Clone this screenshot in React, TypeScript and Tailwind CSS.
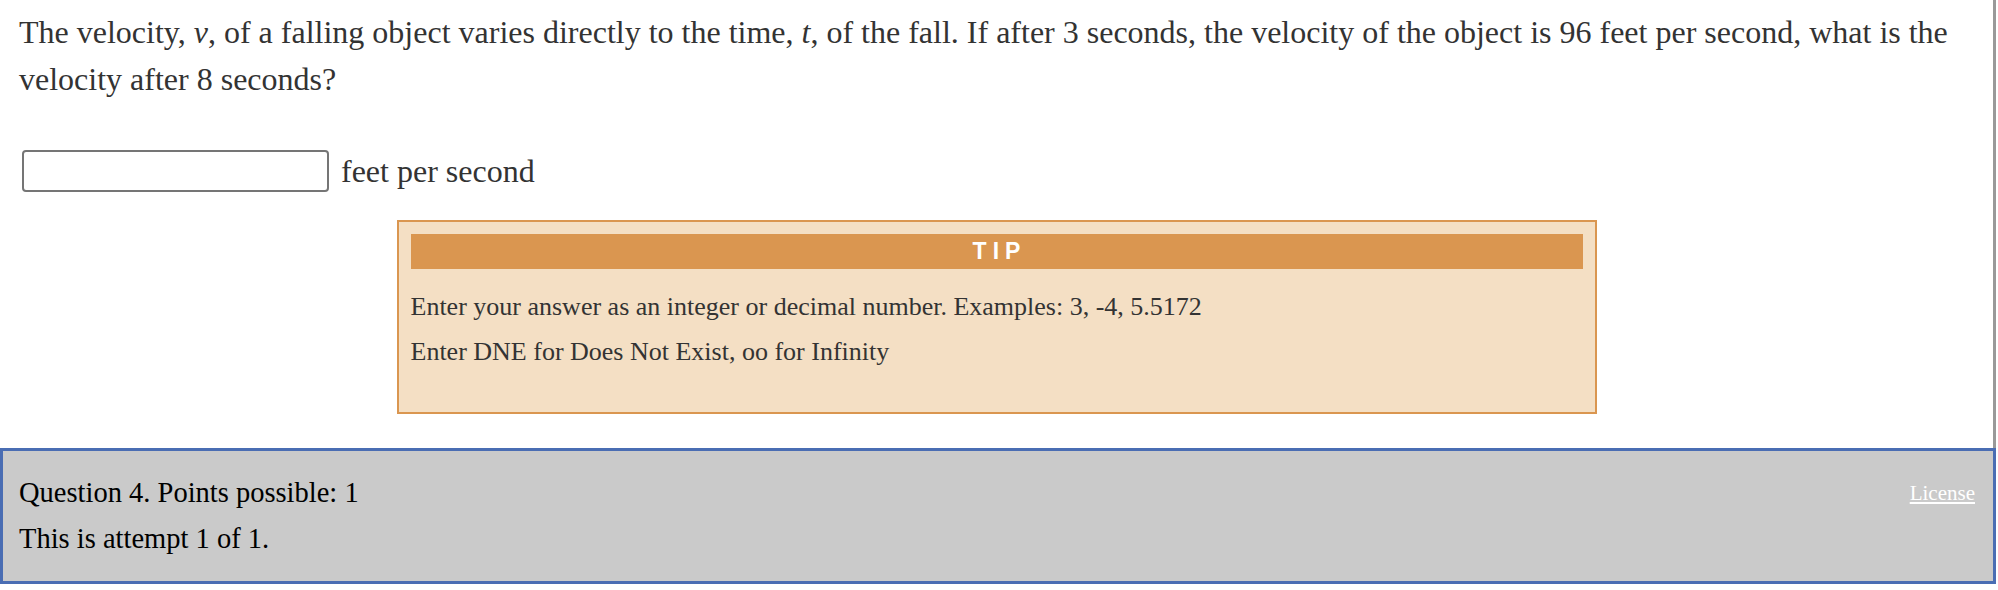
export default function App() {
  return (
    <div className="w-[1998px] h-[590px] bg-white font-['Liberation_Serif',serif] overflow-hidden">
      <div className="w-[1996px] h-[448px] border-r-[3px] border-[#999999] pt-[9px]">
        <p className="pl-[19px] pr-[10px] text-[32px] leading-[47px] text-[#333333]">
          The velocity, <i>v</i>, of a falling object varies directly to the time, <i>t</i>, of the fall. If after 3 seconds, the velocity of the object is 96 feet per second, what is the velocity after 8 seconds?
        </p>
        <div className="mt-[47px] pl-[22px] flex items-center">
          <div className="w-[307px] h-[42px] border-2 border-[#757575] rounded-[4px] bg-white" />
          <span className="ml-[12px] text-[32px] leading-[42px] text-[#333333]">feet per second</span>
        </div>
        <div className="mt-[28px] mx-auto w-[1200px] h-[194px] border-2 border-[#da9650] bg-[#f4dfc4] p-[12px]">
          <div className="h-[35px] bg-[#da9650] flex items-center justify-center">
            <span className="font-['Liberation_Sans',sans-serif] font-bold text-white text-[23px] tracking-[6px] pl-[6px]">TIP</span>
          </div>
          <div className="mt-[15px] text-[26px] leading-[45px] text-[#333333]">
            <p>Enter your answer as an integer or decimal number. Examples: 3, -4, 5.5172</p>
            <p>Enter DNE for Does Not Exist, oo for Infinity</p>
          </div>
        </div>
      </div>
      <div className="w-[1996px] h-[136px] bg-[#cacaca] border-[3px] border-[#4a6db3] pt-[19px] pl-[16px] pr-[18px] flex justify-between items-start">
        <div className="text-[28.5px] leading-[46px] text-black">
          <p>Question 4. Points possible: 1</p>
          <p>This is attempt 1 of 1.</p>
        </div>
        <a className="text-[21px] leading-[46px] text-white underline">License</a>
      </div>
    </div>
  );
}
